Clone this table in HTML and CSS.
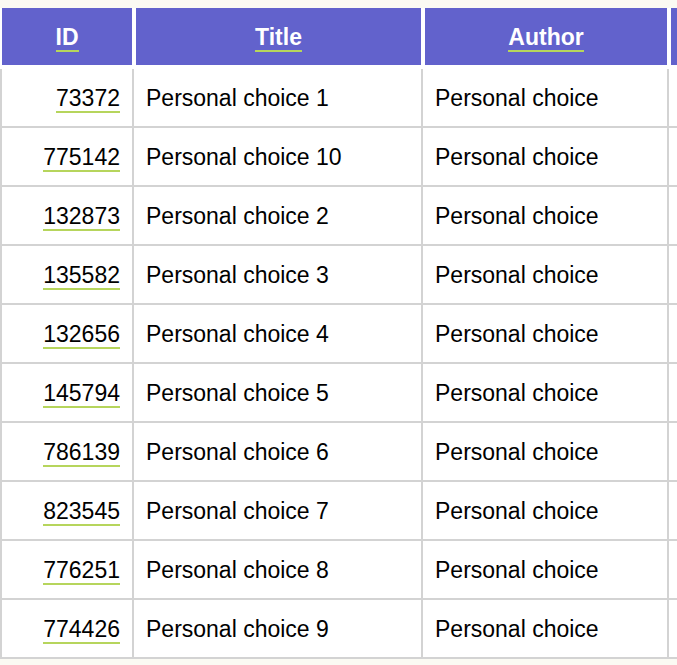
FILE: index.html
```html
<!DOCTYPE html>
<html lang="en">
<head>
<meta charset="utf-8">
<title>Books</title>
<link rel="stylesheet" href="styles.css">
</head>
<body>
<div class="viewport">
  <table class="books">
    <colgroup>
      <col class="c-id">
      <col class="c-title">
      <col class="c-author">
      <col class="c-extra">
    </colgroup>
    <thead>
      <tr>
        <th class="first"><a class="link" href="#">ID</a></th>
        <th><a class="link" href="#">Title</a></th>
        <th><a class="link" href="#">Author</a></th>
        <th></th>
      </tr>
    </thead>
    <tbody>
      <tr><td class="id first"><a class="link" href="#">73372</a></td><td>Personal choice 1</td><td>Personal choice</td><td></td></tr>
      <tr><td class="id first"><a class="link" href="#">775142</a></td><td>Personal choice 10</td><td>Personal choice</td><td></td></tr>
      <tr><td class="id first"><a class="link" href="#">132873</a></td><td>Personal choice 2</td><td>Personal choice</td><td></td></tr>
      <tr><td class="id first"><a class="link" href="#">135582</a></td><td>Personal choice 3</td><td>Personal choice</td><td></td></tr>
      <tr><td class="id first"><a class="link" href="#">132656</a></td><td>Personal choice 4</td><td>Personal choice</td><td></td></tr>
      <tr><td class="id first"><a class="link" href="#">145794</a></td><td>Personal choice 5</td><td>Personal choice</td><td></td></tr>
      <tr><td class="id first"><a class="link" href="#">786139</a></td><td>Personal choice 6</td><td>Personal choice</td><td></td></tr>
      <tr><td class="id first"><a class="link" href="#">823545</a></td><td>Personal choice 7</td><td>Personal choice</td><td></td></tr>
      <tr><td class="id first"><a class="link" href="#">776251</a></td><td>Personal choice 8</td><td>Personal choice</td><td></td></tr>
      <tr><td class="id first"><a class="link" href="#">774426</a></td><td>Personal choice 9</td><td>Personal choice</td><td></td></tr>
    </tbody>
  </table>
</div>
</body>
</html>
```

FILE: styles.css
```css
html, body {
  margin: 0;
  padding: 0;
  background: #fbfaf3;
}

.viewport {
  width: 677px;
  height: 665px;
  overflow: hidden;
  padding-top: 8px;
  box-sizing: border-box;
}

.books {
  border-collapse: separate;
  border-spacing: 0;
  table-layout: fixed;
  width: 869px;
  background: #ffffff;
  font-family: "Liberation Sans", Arial, sans-serif;
  font-size: 23px;
  color: #000000;
}

.c-id { width: 134px; }
.c-title { width: 289px; }
.c-author { width: 246px; }
.c-extra { width: 200px; }

.books th {
  height: 55px;
  padding: 2px 0 0 0;
  background: #6262cc;
  color: #ffffff;
  font-weight: bold;
  text-align: center;
  vertical-align: middle;
  border-left: 2px solid #ffffff;
  border-right: 2px solid #ffffff;
  border-bottom: 4px solid #ffffff;
  box-sizing: content-box;
}

.books td {
  height: 56px;
  padding: 1px 12px 0 12px;
  vertical-align: middle;
  white-space: nowrap;
  border-right: 2px solid #d3d3d3;
  border-bottom: 2px solid #d3d3d3;
  box-sizing: content-box;
}

.books td.first {
  border-left: 2px solid #d3d3d3;
}

.books td.id {
  text-align: right;
}

.link {
  color: inherit;
  text-decoration: none;
  border-bottom: 2px solid #b6d55c;
}
```
